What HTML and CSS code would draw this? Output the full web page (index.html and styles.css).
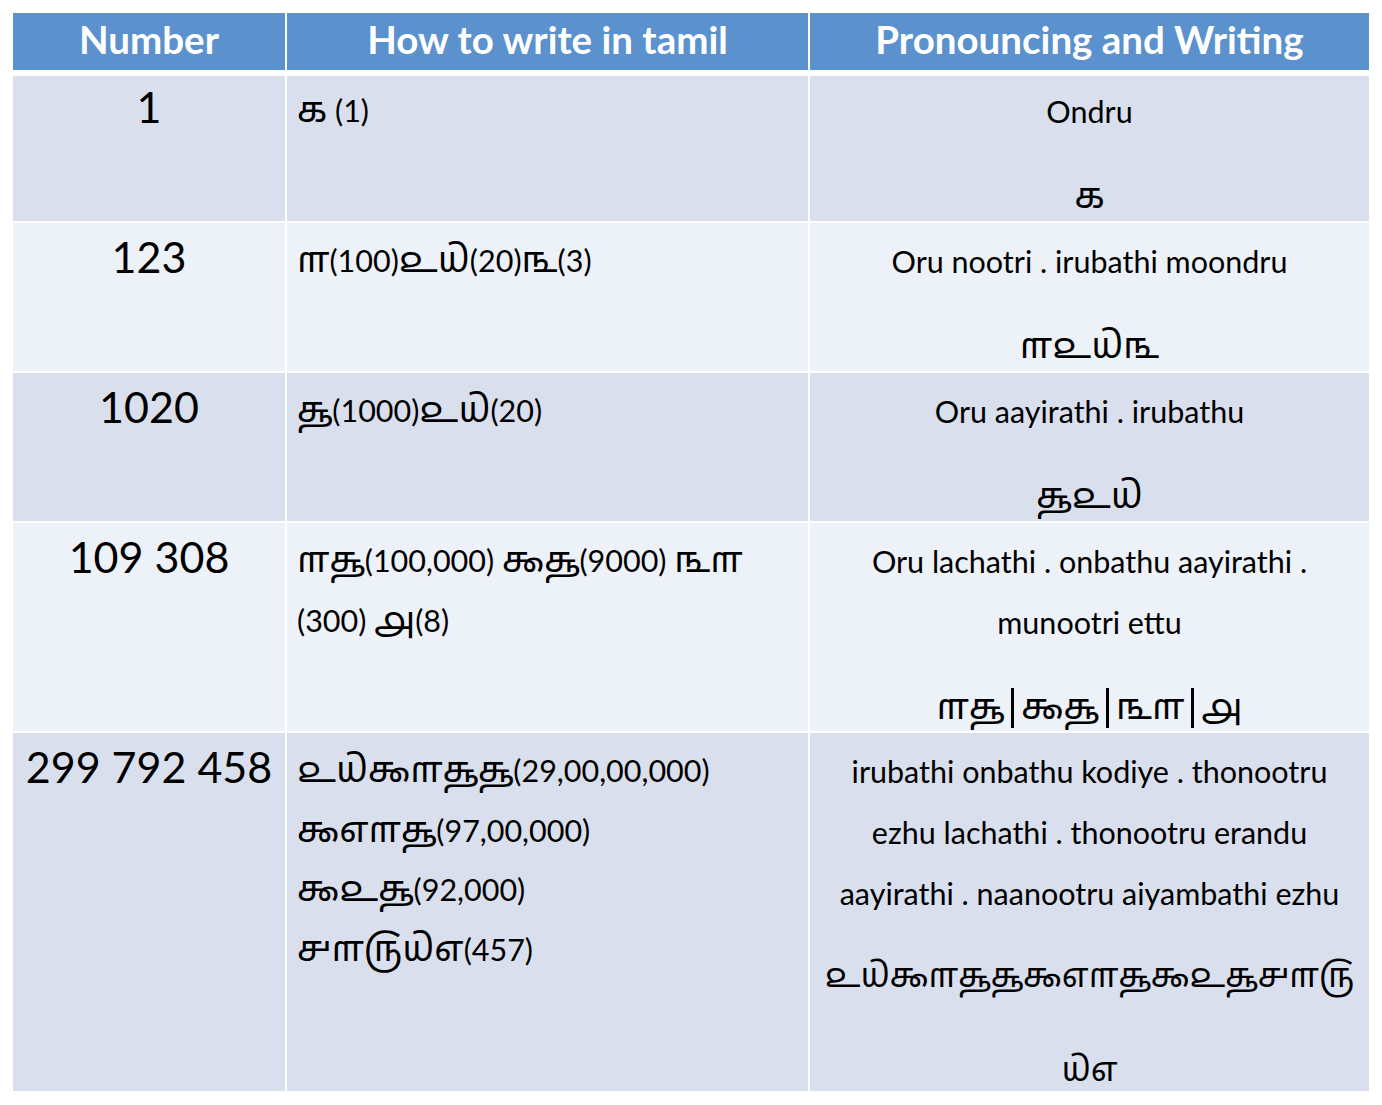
FILE: index.html
```html
<!DOCTYPE html>
<html lang="en">
<head>
<meta charset="utf-8">
<title>Tamil numbers</title>
<link rel="stylesheet" href="styles.css">
</head>
<body>
<table class="numtable">
  <colgroup>
    <col class="c1"><col class="c2"><col class="c3">
  </colgroup>
  <thead>
    <tr>
      <th>Number</th>
      <th class="sep">How to write in tamil</th>
      <th class="sep">Pronouncing and Writing</th>
    </tr>
  </thead>
  <tbody>
    <tr class="odd r1">
      <td class="num">1</td>
      <td class="sep tw"><span class="tn">௧</span> (1)</td>
      <td class="sep pw"><div class="en">Ondru</div><div class="ta"><span class="tn">௧</span></div></td>
    </tr>
    <tr class="even r2">
      <td class="num">123</td>
      <td class="sep tw"><span class="tn">௱</span>(100)<span class="tn">௨௰</span>(20)<span class="tn">௩</span>(3)</td>
      <td class="sep pw"><div class="en">Oru nootri . irubathi moondru</div><div class="ta"><span class="tn">௱௨௰௩</span></div></td>
    </tr>
    <tr class="odd r3">
      <td class="num">1020</td>
      <td class="sep tw"><span class="tn">௲</span>(1000)<span class="tn">௨௰</span>(20)</td>
      <td class="sep pw"><div class="en">Oru aayirathi . irubathu</div><div class="ta"><span class="tn">௲௨௰</span></div></td>
    </tr>
    <tr class="even r4">
      <td class="num">109 308</td>
      <td class="sep tw"><span class="tn">௱௲</span>(100,000) <span class="tn">௯௲</span>(9000) <span class="tn">௩௱</span><br>(300) <span class="tn">௮</span>(8)</td>
      <td class="sep pw"><div class="en">Oru lachathi . onbathu aayirathi .<br>munootri ettu</div><div class="ta"><span class="tn">௱௲</span><span class="bar"></span><span class="tn">௯௲</span><span class="bar"></span><span class="tn">௩௱</span><span class="bar"></span><span class="tn">௮</span></div></td>
    </tr>
    <tr class="odd r5">
      <td class="num">299 792 458</td>
      <td class="sep tw"><span class="tn">௨௰௯௱௲௲</span>(29,00,00,000)<br><span class="tn">௯௭௱௲</span>(97,00,000)<br><span class="tn">௯௨௲</span>(92,000)<br><span class="tn">௪௱௫௰௭</span>(457)</td>
      <td class="sep pw"><div class="en">irubathi onbathu kodiye . thonootru<br>ezhu lachathi . thonootru erandu<br>aayirathi . naanootru aiyambathi ezhu</div><div class="ta"><span class="tn">௨௰௯௱௲௲௯௭௱௲௯௨௲௪௱௫</span></div><div class="ta ta2"><span class="tn">௰௭</span></div></td>
    </tr>
  </tbody>
</table>
</body>
</html>
```

FILE: styles.css
```css
html, body {
  margin: 0;
  padding: 0;
  background: #ffffff;
}

body {
  padding: 13px;
  font-family: Lato, "Noto Sans Tamil", "Lohit Tamil", "Noto Sans", sans-serif;
  color: #000000;
}

.numtable {
  width: 1356px;
  border-collapse: separate;
  border-spacing: 0;
  table-layout: fixed;
}

.c1 { width: 272px; }
.c2 { width: 523px; }
.c3 { width: 561px; }

.numtable th,
.numtable td {
  box-sizing: border-box;
  padding: 0;
  vertical-align: top;
}

.numtable th {
  height: 57px;
  background: #5b91cc;
  color: #ffffff;
  font-weight: 700;
  font-size: 38.5px;
  line-height: 53px;
  text-align: center;
}

.sep {
  border-left: 2px solid #ffffff;
}

.numtable td {
  border-top: 2px solid #ffffff;
}

.r1 td { border-top-width: 6px; height: 151px; }
.r2 td { height: 150px; }
.r3 td { height: 150px; }
.r4 td { height: 210px; }
.r5 td { height: 360px; }

.odd td { background: #d9dfec; }
.even td { background: #edf1f8; }

.num {
  font-size: 43px;
  line-height: 50px;
  padding-top: 9px !important;
  text-align: center;
}

.r1 .num { padding-top: 6px !important; }

.tn {
  font-family: "Noto Sans Tamil", "Lohit Tamil", "Latha", "Noto Sans", sans-serif;
  font-size: 1.2em;
  line-height: 1;
}

.tw {
  font-size: 30.5px;
  line-height: 59.5px;
  padding: 8px 0 0 10px !important;
  text-align: left;
}

.r1 .tw { padding-top: 5px !important; }

.pw {
  font-size: 30.5px;
  text-align: center;
  padding-top: 8px !important;
}

.r1 .pw { padding-top: 5px !important; }

.pw .en {
  line-height: 61px;
  white-space: nowrap;
}

.pw .ta {
  line-height: 40px;
  margin-top: 34px;
  white-space: nowrap;
}

.r5 .pw .ta {
  margin-top: 31px;
}

.r5 .pw .ta2 {
  margin-top: 53px;
}

.r5 .pw .ta .tn {
  font-size: 1.1em;
}

.bar {
  display: inline-block;
  width: 3px;
  height: 40px;
  background: #000000;
  margin: 0 7px;
  vertical-align: -9px;
}
```
